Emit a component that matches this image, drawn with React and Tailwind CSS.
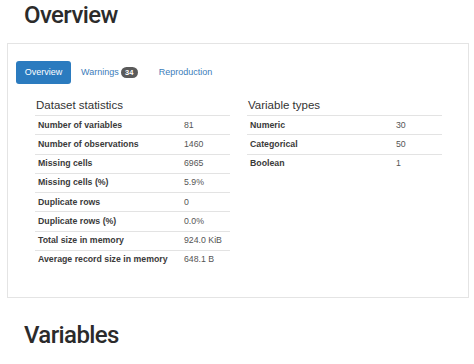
import React from "react";

const stats = [
  ["Number of variables", "81"],
  ["Number of observations", "1460"],
  ["Missing cells", "6965"],
  ["Missing cells (%)", "5.9%"],
  ["Duplicate rows", "0"],
  ["Duplicate rows (%)", "0.0%"],
  ["Total size in memory", "924.0 KiB"],
  ["Average record size in memory", "648.1 B"],
];

const types = [
  ["Numeric", "30"],
  ["Categorical", "50"],
  ["Boolean", "1"],
];

function StatTable({ title, rows }) {
  return (
    <div className="w-[195px]">
      <div className="h-[14px] text-[11.5px] leading-[14px] text-[#333] pl-[1px] mb-[3px]">
        {title}
      </div>
      <div>
        {rows.map(([k, v]) => (
          <div
            key={k}
            className="flex items-center h-[19.25px] border-t border-[#e3e3e3]"
          >
            <div className="w-[149px] pl-[3px] text-[8.75px] font-bold text-[#3a3a3a] whitespace-nowrap">
              {k}
            </div>
            <div className="text-[8.75px] text-[#555] whitespace-nowrap">{v}</div>
          </div>
        ))}
      </div>
    </div>
  );
}

export default function App() {
  return (
    <div
      className="w-[474px] h-[364px] bg-white overflow-hidden"
      style={{ fontFamily: '"Liberation Sans", Arial, sans-serif' }}
    >
      <h1 className="ml-[24px] pt-[2px] h-[43px] font-['Roboto',sans-serif] text-[24px] leading-[27px] font-medium tracking-[-0.6px] text-[#2b2b2b]">
        Overview
      </h1>
      <div className="ml-[7px] w-[462px] h-[255px] border border-[#e4e4e4] pt-[17px] pl-[8px]">
        <div className="flex items-center h-[23px]">
          <div className="w-[55px] h-[23px] rounded-[3px] bg-[#2b7bbf] text-white text-[9px] flex items-center justify-center">
            Overview
          </div>
          <div className="ml-[10px] text-[9px] text-[#3b7cba]">Warnings</div>
          <div className="ml-[2px] w-[17px] h-[11px] rounded-full bg-[#5a5a5a] text-white text-[7.5px] font-bold flex items-center justify-center">
            34
          </div>
          <div className="ml-[21px] text-[9px] text-[#3b7cba]">Reproduction</div>
        </div>
        <div className="flex mt-[14px] pl-[19px] gap-[17px]">
          <StatTable title="Dataset statistics" rows={stats} />
          <StatTable title="Variable types" rows={types} />
        </div>
      </div>
      <h1 className="ml-[24px] mt-[24px] font-['Roboto',sans-serif] text-[24px] leading-[27px] font-medium tracking-[-0.6px] text-[#2b2b2b]">
        Variables
      </h1>
    </div>
  );
}
